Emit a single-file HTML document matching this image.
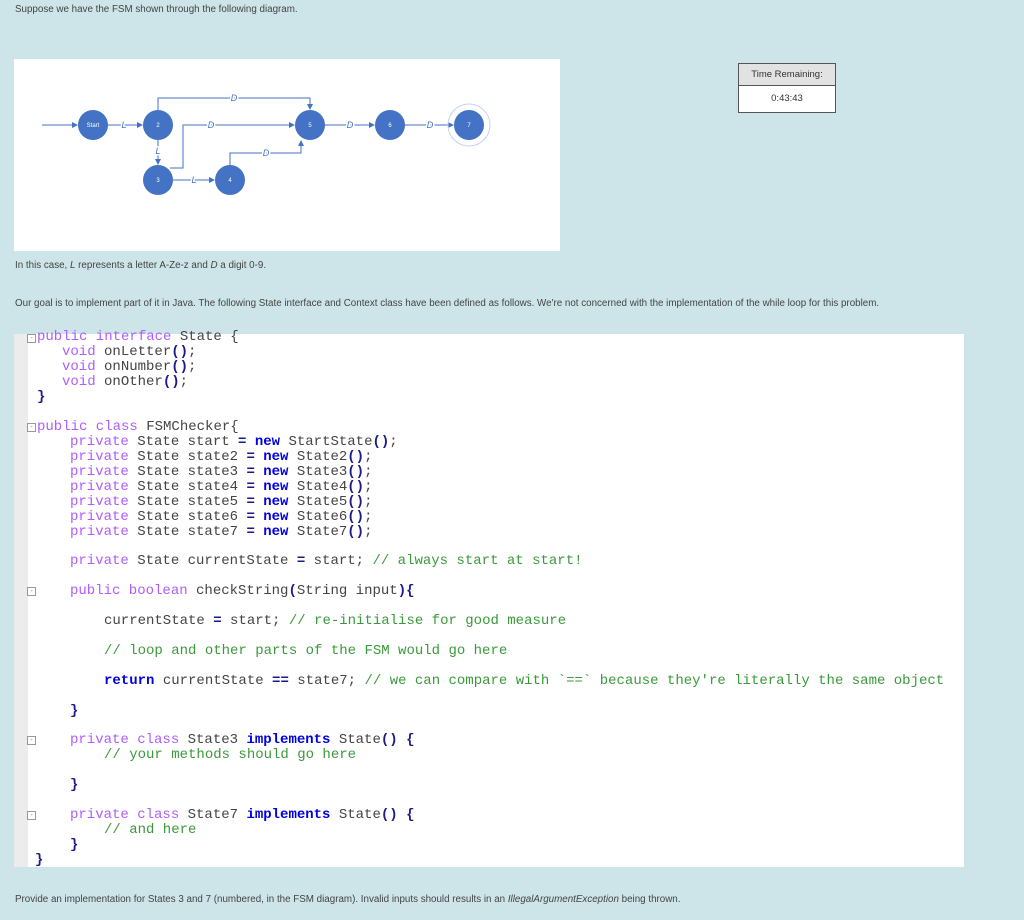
<!DOCTYPE html>
<html><head><meta charset="utf-8"><style>
body{margin:0;width:1024px;height:920px;background:#cde5e8;position:relative;overflow:hidden;font-family:"Liberation Sans",sans-serif;}
.t{position:absolute;font-size:9.8px;color:#444;white-space:nowrap}
#diag{position:absolute;left:14px;top:59px;width:546px;height:192px;background:#fff}
#timer{position:absolute;left:738px;top:63px;width:96px;height:48px;border:1px solid #555;background:#fff;font-size:9.5px;color:#333;text-align:center}
#timer .h{background:#e2e2e2;border-bottom:1px solid #555;height:21px;line-height:21px}
#timer .v{line-height:25px}
#code{position:absolute;left:14px;top:334px;width:950px;height:533px;background:#fff}
#gut{position:absolute;left:14px;top:334px;width:14px;height:533px;background:#ececec}
.c{position:absolute;font-family:"Liberation Mono",monospace;font-size:14px;line-height:16px;color:#444;white-space:pre}
.k{color:#b05cff}.n{color:#0000e0;font-weight:bold}.g{color:#3a9a3a}.p{color:#1a1a8a;font-weight:bold}
.box{position:absolute;width:7px;height:7px;border:1px solid #999;background:#fff;font-size:7px;line-height:7px;text-align:center;color:#777;left:27px}
</style></head><body>
<div class="t" style="left:15px;top:4px">Suppose we have the FSM shown through the following diagram.</div>
<div id="diag"><svg width="546" height="192" viewBox="14 59 546 192" style="position:absolute;left:0;top:0">
<defs><marker id="a" markerWidth="6" markerHeight="6" refX="5" refY="3" orient="auto"><path d="M0,0L6,3L0,6z" fill="#4472c4"/></marker></defs>
<g stroke="#4472c4" stroke-width="1" fill="none">
<line x1="42" y1="125" x2="77" y2="125" marker-end="url(#a)"/>
<line x1="108" y1="125" x2="142" y2="125" marker-end="url(#a)"/>
<polyline points="158,110 158,98 310,98 310,109" marker-end="url(#a)"/>
<polyline points="170,168 183,168 183,125 294,125" marker-end="url(#a)"/>
<line x1="158" y1="140" x2="158" y2="164" marker-end="url(#a)"/>
<line x1="173" y1="180" x2="214" y2="180" marker-end="url(#a)"/>
<polyline points="230,165 230,153 301,153 301,141" marker-end="url(#a)"/>
<line x1="325" y1="125" x2="374" y2="125" marker-end="url(#a)"/>
<line x1="405" y1="125" x2="453" y2="125" marker-end="url(#a)"/>
<circle cx="469" cy="125" r="21" stroke="#c5d2ee"/>
</g>
<g fill="#4472c4"><circle cx="93" cy="125" r="15"/><circle cx="158" cy="125" r="15"/><circle cx="158" cy="180" r="15"/><circle cx="230" cy="180" r="15"/><circle cx="310" cy="125" r="15"/><circle cx="390" cy="125" r="15"/><circle cx="469" cy="125" r="15"/></g>
<g fill="#fff" font-size="6" text-anchor="middle" font-family="Liberation Sans"><text x="93" y="127">Start</text><text x="158" y="127">2</text><text x="158" y="182">3</text><text x="230" y="182">4</text><text x="310" y="127">5</text><text x="390" y="127">6</text><text x="469" y="127">7</text></g>
<g fill="#4472c4" font-size="9" font-style="italic" text-anchor="middle" font-family="Liberation Sans" stroke="#fff" stroke-width="3" paint-order="stroke"><text x="124" y="128">L</text><text x="234" y="101">D</text><text x="211" y="128">D</text><text x="158" y="154">L</text><text x="194" y="183">L</text><text x="266" y="156">D</text><text x="350" y="128">D</text><text x="430" y="128">D</text></g>
</svg></div>
<div id="timer"><div class="h">Time Remaining:</div><div class="v">0:43:43</div></div>
<div class="t" style="left:15px;top:260px">In this case, <i>L</i> represents a letter A-Ze-z and <i>D</i> a digit 0-9.</div>
<div class="t" style="left:15px;top:298px">Our goal is to implement part of it in Java. The following State interface and Context class have been defined as follows. We're not concerned with the implementation of the while loop for this problem.</div>
<div id="code"></div><div id="gut"></div>
<div class="box" style="top:334px">-</div><div class="box" style="top:423px">-</div><div class="box" style="top:587px">-</div><div class="box" style="top:736px">-</div><div class="box" style="top:811px">-</div>
<div class="c" style="left:37px;top:329px"><span class="k">public interface</span> State {</div>
<div class="c" style="left:62px;top:344px"><span class="k">void</span> onLetter<span class="p">()</span>;</div>
<div class="c" style="left:62px;top:359px"><span class="k">void</span> onNumber<span class="p">()</span>;</div>
<div class="c" style="left:62px;top:374px"><span class="k">void</span> onOther<span class="p">()</span>;</div>
<div class="c" style="left:37px;top:389px"><span class="p">}</span></div>
<div class="c" style="left:37px;top:419px"><span class="k">public class</span> FSMChecker{</div>
<div class="c" style="left:70px;top:434px"><span class="k">private</span> State start <span class="p">=</span> <span class="n">new</span> StartState<span class="p">()</span>;</div>
<div class="c" style="left:70px;top:449px"><span class="k">private</span> State state2 <span class="p">=</span> <span class="n">new</span> State2<span class="p">()</span>;</div>
<div class="c" style="left:70px;top:464px"><span class="k">private</span> State state3 <span class="p">=</span> <span class="n">new</span> State3<span class="p">()</span>;</div>
<div class="c" style="left:70px;top:479px"><span class="k">private</span> State state4 <span class="p">=</span> <span class="n">new</span> State4<span class="p">()</span>;</div>
<div class="c" style="left:70px;top:494px"><span class="k">private</span> State state5 <span class="p">=</span> <span class="n">new</span> State5<span class="p">()</span>;</div>
<div class="c" style="left:70px;top:509px"><span class="k">private</span> State state6 <span class="p">=</span> <span class="n">new</span> State6<span class="p">()</span>;</div>
<div class="c" style="left:70px;top:524px"><span class="k">private</span> State state7 <span class="p">=</span> <span class="n">new</span> State7<span class="p">()</span>;</div>
<div class="c" style="left:70px;top:553px"><span class="k">private</span> State currentState <span class="p">=</span> start; <span class="g">// always start at start!</span></div>
<div class="c" style="left:70px;top:583px"><span class="k">public boolean</span> checkString<span class="p">(</span>String input<span class="p">){</span></div>
<div class="c" style="left:104px;top:613px">currentState <span class="p">=</span> start; <span class="g">// re-initialise for good measure</span></div>
<div class="c" style="left:104px;top:643px"><span class="g">// loop and other parts of the FSM would go here</span></div>
<div class="c" style="left:104px;top:673px"><span class="n">return</span> currentState <span class="p">==</span> state7; <span class="g">// we can compare with `==` because they're literally the same object</span></div>
<div class="c" style="left:70px;top:703px"><span class="p">}</span></div>
<div class="c" style="left:70px;top:732px"><span class="k">private class</span> State3 <span class="n">implements</span> State<span class="p">()</span> <span class="p">{</span></div>
<div class="c" style="left:104px;top:747px"><span class="g">// your methods should go here</span></div>
<div class="c" style="left:70px;top:777px"><span class="p">}</span></div>
<div class="c" style="left:70px;top:807px"><span class="k">private class</span> State7 <span class="n">implements</span> State<span class="p">()</span> <span class="p">{</span></div>
<div class="c" style="left:104px;top:822px"><span class="g">// and here</span></div>
<div class="c" style="left:70px;top:837px"><span class="p">}</span></div>
<div class="c" style="left:35px;top:852px"><span class="p">}</span></div>
<div class="t" style="left:15px;top:894px">Provide an implementation for States 3 and 7 (numbered, in the FSM diagram). Invalid inputs should results in an <i>IllegalArgumentException</i> being thrown.</div>
</body></html>
